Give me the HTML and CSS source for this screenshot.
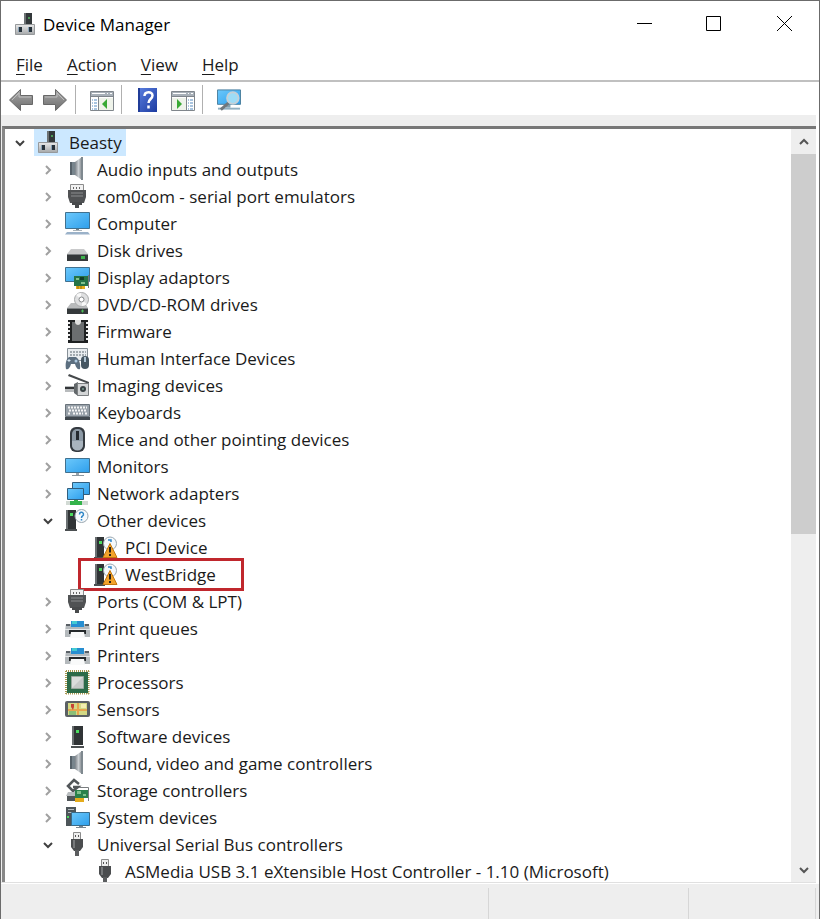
FILE: index.html
```html
<!DOCTYPE html>
<html lang="en">
<head>
  <meta charset="UTF-8">
  <title>Device Manager</title>
  <link rel="stylesheet" href="styles.css">
</head>
<body>

<!-- icon set -->
<svg class="sprite" width="0" height="0" aria-hidden="true">
  <defs>
    <linearGradient id="blue" x1="0" y1="0" x2="1" y2="1">
      <stop offset="0" stop-color="#6cc8fb"/><stop offset="1" stop-color="#2e9fec"/>
    </linearGradient>
    <linearGradient id="grey" x1="0" y1="0" x2="0" y2="1">
      <stop offset="0" stop-color="#a9a9a9"/><stop offset="1" stop-color="#6c6c6c"/>
    </linearGradient>
    <linearGradient id="metal" x1="0" y1="0" x2="1" y2="0">
      <stop offset="0" stop-color="#7b8187"/><stop offset=".5" stop-color="#c9ced2"/><stop offset="1" stop-color="#7f858a"/>
    </linearGradient>
    <linearGradient id="light" x1="0" y1="0" x2="0" y2="1">
      <stop offset="0" stop-color="#e9e9e9"/><stop offset="1" stop-color="#a5a8aa"/>
    </linearGradient>
    <linearGradient id="help-blue" x1="0" y1="0" x2="1" y2="1">
      <stop offset="0" stop-color="#5b7fe0"/><stop offset="1" stop-color="#1c3ba0"/>
    </linearGradient>
  </defs>

  <symbol id="i-root" viewBox="0 0 25 25">
    <path d="M10 1h8v12h-8z" fill="#33383a"/>
    <path d="M10 1h2v12h-2z" fill="#6d7274"/>
    <path d="M14 5h2v2h-2z" fill="#4c9a58"/>
    <path d="M1.500 12.500h19v10h-19z" fill="url(#light)" stroke="#96999b"/>
    <path d="M4 15h4v5H4zM14 15h4v5h-4z" fill="#27323b"/>
    <path d="M4 15h1v5H4zM14 15h1v5h-1z" fill="#8aa3b8"/>
  </symbol>
  <symbol id="i-speaker" viewBox="0 0 25 25">
    <path d="M5 5h5v13H5z" fill="#78858d"/>
    <path d="M5 5h2v13H5z" fill="#566169"/>
    <path d="M10 5L17 0v23l-7-5z" fill="url(#metal)"/>
    <path d="M16 0h2v23h-2z" fill="#7f898f"/>
  </symbol>
  <symbol id="i-serial" viewBox="0 0 25 25">
    <path d="M5.500 .5h13v7h-13z" fill="#f1f1f1" stroke="#8b8b8b"/>
    <path d="M8 3h1v2H8zM11 3h1v2h-1zM14 3h1v2h-1z" fill="#666"/>
    <path d="M3 6h18v7l-2 6H5l-2-6z" fill="#505254"/>
    <path d="M6 9h12M6 12h12" stroke="#8a8c8e"/>
    <path d="M7 18h3v3H7zM14 18h3v3h-3zM10 18h4v6h-4z" fill="#484a4c"/>
  </symbol>
  <symbol id="i-computer" viewBox="0 0 25 25">
    <path d="M.5 1.500h24v16H.5z" fill="url(#blue)" stroke="#41718f"/>
    <path d="M11 18h3v1h-3z" fill="#75818a"/>
    <path d="M8 19h9v1H8z" fill="#aab4bb"/>
    <path d="M2 21h21l2 2.500H0z" fill="#9bb2c9"/>
  </symbol>
  <symbol id="i-disk" viewBox="0 0 25 25">
    <path d="M6 11h13l4 5H2z" fill="#c9cacb"/>
    <path d="M2 16h21v7H2z" fill="#35393b"/>
    <path d="M2 16h21v1H2z" fill="#7d8183"/>
    <path d="M16 18h4v3h-4z" fill="#3eb34d"/>
  </symbol>
  <symbol id="i-display" viewBox="0 0 25 25">
    <path d="M.5 2.500h24v14H.5z" fill="url(#blue)" stroke="#41718f"/>
    <path d="M9 11h14v10H9z" fill="#267346"/>
    <path d="M11 13h3v2h-3zM16 17h4v2h-4z" fill="#82c28d"/>
    <path d="M15 12h4v3h-4z" fill="#153d29"/>
    <path d="M23 10h1v13h-1z" fill="#777"/>
    <path d="M11 21h9v3h-9z" fill="#e5ac1c"/>
    <path d="M13 21v3M16 21v3" stroke="#976f0a"/>
  </symbol>
  <symbol id="i-dvd" viewBox="0 0 25 25">
    <path d="M6 11h14l3 5H2z" fill="#b9bbbc"/>
    <circle cx="16.500" cy="7.500" r="7" fill="#dedfe0" stroke="#a7a9aa"/>
    <path d="M16 7l-5-4a7 7 0 0 1 5-2zM17 8l5 4a7 7 0 0 1-5 2z" fill="#f8f8f8"/>
    <circle cx="16.500" cy="7.500" r="2.500" fill="#fff" stroke="#85888a"/>
    <path d="M2 16h21v6H2z" fill="#35393b"/>
    <path d="M2 16h21v1H2z" fill="#7d8183"/>
    <path d="M16 19h3M17.500 17.500v3" stroke="#4dbd58"/>
  </symbol>
  <symbol id="i-chip" viewBox="0 0 25 25">
    <path d="M3 1h20v23H3z" fill="#1f2122"/>
    <path d="M4 3v20M22 3v20" stroke="#efefef" stroke-width="2" stroke-dasharray="2 2"/>
    <path d="M7 3h3a3 3 0 0 0 6 0h3v19H7z" fill="#6b6e70"/>
    <path d="M10 1h6v2a3 3 0 0 1-6 0z" fill="#e0e0e0"/>
  </symbol>
  <symbol id="i-hid" viewBox="0 0 25 25">
    <path d="M2.500 2.500h20v12h-20z" fill="#e9edf0" stroke="#879097"/>
    <path d="M5 6h16M5 9h16" stroke="#8b949b" stroke-width="1.500" stroke-dasharray="2 1"/>
    <path d="M1 23c-1-5 0-10 3-12h7c3 2 5 7 4 12-2 1-4-1-5-5H6c-1 4-3 6-5 5z" fill="#5c6f80"/>
    <path d="M4 13v3M2.500 14.500h3" stroke="#d5e4ef"/>
    <circle cx="11" cy="15" r="1.500" fill="#aecae0"/>
    <rect x="16" y="10" width="8" height="13" rx="4" fill="#465662"/>
    <path d="M20 11v5" stroke="#adc2d2" stroke-width="2"/>
  </symbol>
  <symbol id="i-camera" viewBox="0 0 25 25">
    <path d="M4 1l20 8v2L3 3z" fill="#45494b"/>
    <path d="M0 13h10v6H0z" fill="#b8bbbd"/>
    <path d="M0 14h10v2H0z" fill="#333638"/>
    <path d="M9 11l4-2v14l-4-3z" fill="#63686b"/>
    <path d="M12.500 10.500h11v12h-11z" fill="#d3d5d6" stroke="#7b7f81"/>
    <circle cx="18" cy="16" r="3" fill="#3a4245"/>
    <circle cx="18" cy="16" r="1" fill="#789b8e"/>
  </symbol>
  <symbol id="i-keyboard" viewBox="0 0 25 25">
    <path d="M.5 4.500h24v12H.5z" fill="#98a1a9" stroke="#6a737b"/>
    <path d="M3 7.500h19M4 10.500h18M3 13.500h3M8 13.500h10M20 13.500h2" stroke="#f5f5f5" stroke-width="2" stroke-dasharray="2 1"/>
    <path d="M0 17h25v3H0z" fill="#41484e"/>
  </symbol>
  <symbol id="i-mouse" viewBox="0 0 25 25">
    <rect x="5" y="0" width="15" height="25" rx="6" fill="#343a40"/>
    <rect x="7" y="2" width="11" height="21" rx="5" fill="#8d9aa6"/>
    <path d="M7 14h11v4a5 5 0 0 1-11 0z" fill="#a9b4be"/>
    <path d="M11 4h3v9h-3z" fill="#242a30"/>
  </symbol>
  <symbol id="i-monitor" viewBox="0 0 25 25">
    <path d="M.5 4.500h24v14H.5z" fill="url(#blue)" stroke="#41718f"/>
    <path d="M11 19h3v2h-3z" fill="#98a3ab"/>
    <path d="M7 21h12v1H7z" fill="#8c979f"/>
  </symbol>
  <symbol id="i-network" viewBox="0 0 25 25">
    <path d="M7.500 1.500h17v12h-17z" fill="url(#blue)" stroke="#315e7e"/>
    <path d="M2.500 7.500h16v11h-16z" fill="url(#blue)" stroke="#315e7e"/>
    <path d="M1 20h22v4H1z" fill="#d2dad4"/>
    <path d="M9 19h4v1h4v4H5v-4h4z" fill="#33b34a"/>
  </symbol>
  <symbol id="i-other" viewBox="0 0 25 25">
    <path d="M1 2h10v19H1z" fill="#303436"/>
    <path d="M1 2h2v19H1z" fill="#6b7072"/>
    <path d="M0 21h12v2H0z" fill="#4b4f51"/>
    <path d="M5 5h3v3H5z" fill="#4bdc5f"/>
    <circle cx="16.500" cy="8" r="6.500" fill="#f5f9fc" stroke="#9ba8b1"/>
    <path d="M14.500 6.500a2 2 0 1 1 3 1.500q-1 .5-1 2M16.500 11v1.500" fill="none" stroke="#3187c7" stroke-width="1.500"/>
  </symbol>
  <symbol id="i-unknown" viewBox="0 0 25 25">
    <path d="M2 2h9v20H2z" fill="#303436"/>
    <path d="M2 2h2v20H2z" fill="#6b7072"/>
    <path d="M1 22h11v2H1z" fill="#4b4f51"/>
    <path d="M6 6h3v3H6z" fill="#4bdc5f"/>
    <circle cx="17" cy="8.500" r="6.500" fill="#f5f9fc" stroke="#9ba8b1"/>
    <path d="M15 5h3v2" fill="none" stroke="#3187c7" stroke-width="1.500"/>
    <path d="M17 8.500L24 22.500H10z" fill="#f3a32b" stroke="#c47810" stroke-linejoin="round"/>
    <path d="M17 12v5.500M17 19v2" stroke="#28221a" stroke-width="2"/>
  </symbol>
  <symbol id="i-printer" viewBox="0 0 25 25">
    <path d="M1 8h23l1 7v6H0v-6z" fill="#b4b9bc"/>
    <path d="M6 5h13v6H6z" fill="#278ed1"/>
    <path d="M7 5h5v3H7z" fill="#43cbd2"/>
    <path d="M1 8h4v2H1zM20 8h4v2h-4z" fill="#596066"/>
    <path d="M0 13h25v1H0z" fill="#e6e8e9"/>
    <path d="M4 14h17v4H4z" fill="#25292b"/>
    <path d="M6 16h13l1 6H5z" fill="#f9fafa"/>
  </symbol>
  <symbol id="i-cpu" viewBox="0 0 25 25">
    <path d="M1 1v23M23.500 1v23M1 1h23M1 23.500h23" stroke="#a7974e" stroke-width="2" stroke-dasharray="1 1"/>
    <path d="M2 2h21v21H2z" fill="#2c6b48"/>
    <path d="M6.500 6.500h12v12h-12z" fill="#dadddb" stroke="#99a99e"/>
    <path d="M7 18L18 7v11z" fill="#c5c9c7"/>
  </symbol>
  <symbol id="i-sensor" viewBox="0 0 25 25">
    <rect x="0" y="4" width="25" height="16" rx="2" fill="#5b6164"/>
    <path d="M3 6h19v12H3z" fill="#d4da85"/>
    <path d="M12 6h2v12h-2zM3 12h19v2H3z" fill="#e6a64f"/>
    <path d="M4 14h7v4H4z" fill="#8cbf77"/>
    <path d="M6 7h3v3l-1 3-2-3z" fill="#c94336"/>
    <path d="M16 7h5v4h-5z" fill="#f3eeb1"/>
  </symbol>
  <symbol id="i-software" viewBox="0 0 25 25">
    <path d="M7 2h11v19H7z" fill="#303436"/>
    <path d="M7 2h2v19H7z" fill="#696e70"/>
    <path d="M6 22h13v2H6z" fill="#4b4f51"/>
    <path d="M11 6h3v3h-3z" fill="#4bdc5f"/>
  </symbol>
  <symbol id="i-storage" viewBox="0 0 25 25">
    <path d="M14 6L9 2 3 8l5 5 5-4H8" fill="none" stroke="#515659" stroke-width="2.500"/>
    <path d="M2 18h9v5H2z" fill="#505558"/>
    <path d="M3 14h7l2 4H1z" fill="#b8bcbe"/>
    <path d="M10 12h13v8H10z" fill="#2b814a"/>
    <path d="M12 13h4v3h-4zM18 16h3v2h-3z" fill="#7fc08a"/>
    <path d="M10 20h9v4h-9z" fill="#e5ac1c"/>
    <path d="M14 9.500h9.500V23" fill="none" stroke="#797d7f"/>
  </symbol>
  <symbol id="i-system" viewBox="0 0 25 25">
    <path d="M1 2h10v19H1z" fill="#4d5559"/>
    <path d="M3 4h6v1H3zM3 7h6v1H3z" fill="#b5bcbf"/>
    <path d="M2 11h2v2H2z" fill="#4bdc5f"/>
    <path d="M6.500 7.500h18v13h-18z" fill="url(#blue)" stroke="#3b6b89"/>
    <path d="M14 21h4v1h-4zM11 22h10v1H11z" fill="#7a8790"/>
  </symbol>
  <symbol id="i-usb" viewBox="0 0 25 25">
    <path d="M8.500 .5h7v7h-7z" fill="#eee" stroke="#8b8b8b"/>
    <path d="M10 3h1v2h-1zM13 3h1v2h-1z" fill="#555"/>
    <path d="M6 7h12v8l-3 4H9l-3-4z" fill="#4b4d4f"/>
    <path d="M8 8h2v8H8z" fill="#77797b"/>
    <path d="M10 18h4v6h-4z" fill="#5b5d5f"/>
  </symbol>

  <!-- toolbar -->
  <symbol id="t-arrow" viewBox="0 0 24 24">
    <path d="M.5 12L11.500 1.500v6h12v9h-12v6z" fill="url(#grey)" stroke="#686868" stroke-linejoin="round"/>
    <path d="M3 12l7-7v4h12" fill="none" stroke="#bdbdbd"/>
  </symbol>
  <symbol id="t-panel" viewBox="0 0 24 24">
    <path d="M.5 3.500h23v19H.5z" fill="#fff" stroke="#80868c"/>
    <path d="M1 4h22v5H1z" fill="#a8b0b8"/>
    <path d="M2 5.500h13M17 5.500h1M20 5.500h2" stroke="#fff"/>
    <path d="M1 8.500h22M8.500 9v13" stroke="#80868c"/>
    <path d="M2 12h5M2 15h5M2 18h5M2 21h5" stroke="#548bc0" stroke-dasharray="1 1 3"/>
    <path d="M9 10h14v12H9z" fill="#eff3ea"/>
    <path d="M12 16l5-5v10z" fill="#39a935"/>
  </symbol>
  <symbol id="t-run" viewBox="0 0 24 24">
    <path d="M.5 3.500h23v19H.5z" fill="#fff" stroke="#80868c"/>
    <path d="M1 4h22v5H1z" fill="#a8b0b8"/>
    <path d="M2 5.500h13M17 5.500h1M20 5.500h2" stroke="#fff"/>
    <path d="M1 10h14v12H1z" fill="#eff3ea"/>
    <path d="M1 8.500h22M15.500 9v13" stroke="#80868c"/>
    <path d="M17 12h5M17 15h5M17 18h5M17 21h5" stroke="#548bc0" stroke-dasharray="1 1 3"/>
    <path d="M11 16l-5-5v10z" fill="#39a935"/>
  </symbol>
  <symbol id="t-help" viewBox="0 0 24 24">
    <path d="M2 0h19v24H2z" fill="url(#help-blue)"/>
    <path d="M2 0h2v24H2z" fill="#203c98"/>
    <path d="M8.500 8c0-5 8-5 8-.5 0 3.500-4 3.500-4 7.500M12.500 17.500v3" fill="none" stroke="#fff" stroke-width="2.500"/>
  </symbol>
  <symbol id="t-scan" viewBox="0 0 25 24">
    <path d="M.5 1.500h24v15H.5z" fill="url(#blue)" stroke="#4a7e9d"/>
    <path d="M9 17h5v3H9z" fill="#829fae"/>
    <path d="M1 20h23v2H1z" fill="#91afc0"/>
    <path d="M12 15l-8 7" stroke="#70777c" stroke-width="3"/>
    <circle cx="16.500" cy="10" r="6" fill="#9ddcf6" stroke="#c5d0d7" stroke-width="2"/>
  </symbol>

  <symbol id="c-right" viewBox="0 0 16 16">
    <path d="M6 4l4 4-4 4" fill="none" stroke="#a0a0a0" stroke-width="2"/>
  </symbol>
  <symbol id="c-down" viewBox="0 0 16 16">
    <path d="M4 6l4 4 4-4" fill="none" stroke="#404040" stroke-width="2"/>
  </symbol>
</svg>

<div class="window">
  <header class="titlebar">
    <svg class="icon"><use href="#i-root"/></svg>
    <h1>Device Manager</h1>
    <div class="window-buttons">
      <button aria-label="Minimise"><svg viewBox="0 0 16 16"><path d="M1 7.500h15"/></svg></button>
      <button aria-label="Maximise"><svg viewBox="0 0 16 16"><path d="M.5 .5h14v14H.5z"/></svg></button>
      <button aria-label="Close"><svg viewBox="0 0 16 16"><path d="M1 0l15 15M16 0L1 15"/></svg></button>
    </div>
  </header>

  <nav class="menubar">
    <button><u>F</u>ile</button>
    <button><u>A</u>ction</button>
    <button><u>V</u>iew</button>
    <button><u>H</u>elp</button>
  </nav>

  <div class="toolbar">
    <div class="group nav">
      <button aria-label="Back"><svg><use href="#t-arrow"/></svg></button>
      <button aria-label="Forward" class="flip"><svg><use href="#t-arrow"/></svg></button>
    </div>
    <div class="group">
      <button aria-label="Show console tree"><svg><use href="#t-panel"/></svg></button>
    </div>
    <div class="group">
      <button aria-label="Help"><svg><use href="#t-help"/></svg></button>
      <button aria-label="Show action pane"><svg><use href="#t-run"/></svg></button>
    </div>
    <div class="group">
      <button aria-label="Scan for hardware changes"><svg><use href="#t-scan"/></svg></button>
    </div>
  </div>

  <main class="pane">
    <ul class="tree">
      <li>
        <div class="row"><button class="toggle" aria-label="Collapse"><svg><use href="#c-down"/></svg></button><span class="node selected"><svg class="icon"><use href="#i-root"/></svg>Beasty</span></div>
        <ul>
          <li class="row"><button class="toggle" aria-label="Expand"><svg><use href="#c-right"/></svg></button><span class="node"><svg class="icon"><use href="#i-speaker"/></svg>Audio inputs and outputs</span></li>
          <li class="row"><button class="toggle" aria-label="Expand"><svg><use href="#c-right"/></svg></button><span class="node"><svg class="icon"><use href="#i-serial"/></svg>com0com - serial port emulators</span></li>
          <li class="row"><button class="toggle" aria-label="Expand"><svg><use href="#c-right"/></svg></button><span class="node"><svg class="icon"><use href="#i-computer"/></svg>Computer</span></li>
          <li class="row"><button class="toggle" aria-label="Expand"><svg><use href="#c-right"/></svg></button><span class="node"><svg class="icon"><use href="#i-disk"/></svg>Disk drives</span></li>
          <li class="row"><button class="toggle" aria-label="Expand"><svg><use href="#c-right"/></svg></button><span class="node"><svg class="icon"><use href="#i-display"/></svg>Display adaptors</span></li>
          <li class="row"><button class="toggle" aria-label="Expand"><svg><use href="#c-right"/></svg></button><span class="node"><svg class="icon"><use href="#i-dvd"/></svg>DVD/CD-ROM drives</span></li>
          <li class="row"><button class="toggle" aria-label="Expand"><svg><use href="#c-right"/></svg></button><span class="node"><svg class="icon"><use href="#i-chip"/></svg>Firmware</span></li>
          <li class="row"><button class="toggle" aria-label="Expand"><svg><use href="#c-right"/></svg></button><span class="node"><svg class="icon"><use href="#i-hid"/></svg>Human Interface Devices</span></li>
          <li class="row"><button class="toggle" aria-label="Expand"><svg><use href="#c-right"/></svg></button><span class="node"><svg class="icon"><use href="#i-camera"/></svg>Imaging devices</span></li>
          <li class="row"><button class="toggle" aria-label="Expand"><svg><use href="#c-right"/></svg></button><span class="node"><svg class="icon"><use href="#i-keyboard"/></svg>Keyboards</span></li>
          <li class="row"><button class="toggle" aria-label="Expand"><svg><use href="#c-right"/></svg></button><span class="node"><svg class="icon"><use href="#i-mouse"/></svg>Mice and other pointing devices</span></li>
          <li class="row"><button class="toggle" aria-label="Expand"><svg><use href="#c-right"/></svg></button><span class="node"><svg class="icon"><use href="#i-monitor"/></svg>Monitors</span></li>
          <li class="row"><button class="toggle" aria-label="Expand"><svg><use href="#c-right"/></svg></button><span class="node"><svg class="icon"><use href="#i-network"/></svg>Network adapters</span></li>
          <li>
            <div class="row"><button class="toggle" aria-label="Collapse"><svg><use href="#c-down"/></svg></button><span class="node"><svg class="icon"><use href="#i-other"/></svg>Other devices</span></div>
            <ul>
              <li class="row leaf"><span class="node"><svg class="icon"><use href="#i-unknown"/></svg>PCI Device</span></li>
              <li class="row leaf"><span class="node marked"><svg class="icon"><use href="#i-unknown"/></svg>WestBridge</span></li>
            </ul>
          </li>
          <li class="row"><button class="toggle" aria-label="Expand"><svg><use href="#c-right"/></svg></button><span class="node"><svg class="icon"><use href="#i-serial"/></svg>Ports (COM &amp; LPT)</span></li>
          <li class="row"><button class="toggle" aria-label="Expand"><svg><use href="#c-right"/></svg></button><span class="node"><svg class="icon"><use href="#i-printer"/></svg>Print queues</span></li>
          <li class="row"><button class="toggle" aria-label="Expand"><svg><use href="#c-right"/></svg></button><span class="node"><svg class="icon"><use href="#i-printer"/></svg>Printers</span></li>
          <li class="row"><button class="toggle" aria-label="Expand"><svg><use href="#c-right"/></svg></button><span class="node"><svg class="icon"><use href="#i-cpu"/></svg>Processors</span></li>
          <li class="row"><button class="toggle" aria-label="Expand"><svg><use href="#c-right"/></svg></button><span class="node"><svg class="icon"><use href="#i-sensor"/></svg>Sensors</span></li>
          <li class="row"><button class="toggle" aria-label="Expand"><svg><use href="#c-right"/></svg></button><span class="node"><svg class="icon"><use href="#i-software"/></svg>Software devices</span></li>
          <li class="row"><button class="toggle" aria-label="Expand"><svg><use href="#c-right"/></svg></button><span class="node"><svg class="icon"><use href="#i-speaker"/></svg>Sound, video and game controllers</span></li>
          <li class="row"><button class="toggle" aria-label="Expand"><svg><use href="#c-right"/></svg></button><span class="node"><svg class="icon"><use href="#i-storage"/></svg>Storage controllers</span></li>
          <li class="row"><button class="toggle" aria-label="Expand"><svg><use href="#c-right"/></svg></button><span class="node"><svg class="icon"><use href="#i-system"/></svg>System devices</span></li>
          <li>
            <div class="row"><button class="toggle" aria-label="Collapse"><svg><use href="#c-down"/></svg></button><span class="node"><svg class="icon"><use href="#i-usb"/></svg>Universal Serial Bus controllers</span></div>
            <ul>
              <li class="row leaf"><span class="node"><svg class="icon"><use href="#i-usb"/></svg>ASMedia USB 3.1 eXtensible Host Controller - 1.10 (Microsoft)</span></li>
            </ul>
          </li>
        </ul>
      </li>
    </ul>
    <div class="scrollbar">
      <button aria-label="Scroll up"><svg viewBox="0 0 16 16"><path d="M4 10l4-4 4 4"/></svg></button>
      <div class="track"><div class="thumb"></div></div>
      <button aria-label="Scroll down"><svg viewBox="0 0 16 16"><path d="M4 6l4 4 4-4"/></svg></button>
    </div>
  </main>

  <footer class="statusbar"><span></span><span></span><span></span></footer>
</div>

</body>
</html>
```

FILE: styles.css
```css
* {
  box-sizing: border-box;
}

body {
  margin: 0;
  font-family: "Open Sans", "Noto Sans", sans-serif;
  font-size: 17px;
  color: #1a1a1a;
}

button {
  padding: 0;
  border: none;
  background: none;
  font: inherit;
  color: inherit;
}

svg {
  display: block;
}

ul {
  list-style: none;
  margin: 0;
  padding: 0;
}

.sprite {
  position: absolute;
}

.window {
  display: flex;
  flex-direction: column;
  height: 100vh;
  border: 1px solid #6b6b6b;
  border-bottom: none;
  background: #fff;
}

.icon {
  width: 25px;
  height: 25px;
  flex: none;
}

/* title bar */
.titlebar {
  display: flex;
  align-items: center;
  gap: 4px;
  height: 46px;
  padding-left: 13px;
}

.titlebar h1 {
  margin: 0;
  font-size: 17px;
  font-weight: normal;
  color: #000;
}

.window-buttons {
  display: flex;
  margin-left: auto;
}

.window-buttons button {
  display: flex;
  align-items: center;
  justify-content: center;
  width: 70px;
  height: 46px;
}

.window-buttons svg {
  width: 16px;
  height: 16px;
  fill: none;
  stroke: #000;
}

/* menu */
.menubar {
  display: flex;
  gap: 24px;
  height: 33px;
  padding: 2px 0 0 15px;
}

.menubar u {
  text-underline-offset: 3px;
}

/* toolbar */
.toolbar {
  display: flex;
  align-items: stretch;
  height: 35px;
  padding: 3px 0 1px 8px;
  border-top: 2px solid #c0c0c0;
}

.group {
  display: flex;
  align-items: center;
  gap: 11px;
  padding-right: 7px;
}

.group.nav {
  gap: 10px;
  padding-right: 8px;
}

.group + .group {
  padding-left: 14px;
  border-left: 1px solid #b0b0b0;
}

.group svg {
  width: 24px;
  height: 24px;
}

.flip {
  transform: scaleX(-1);
}

/* device tree */
.pane {
  display: flex;
  flex: 1;
  min-height: 0;
  margin-right: 3px;
  border-top: 11px solid #eee;
  border-bottom: 1px solid #e0e0e0;
  border-left: 1px solid #eee;
  background: #fff;
}

.tree {
  flex: 1;
  overflow: hidden;
  padding-left: 7px;
  border-top: 3px solid #777;
  border-left: 3px solid #888;
  line-height: 20px;
}

.tree ul {
  padding-left: 28px;
}

.row {
  display: flex;
  align-items: center;
  height: 27px;
}

.toggle {
  margin-right: 6px;
}

.toggle svg {
  width: 16px;
  height: 16px;
}

.leaf {
  padding-left: 22px;
}

.node {
  position: relative;
  display: flex;
  align-items: center;
  gap: 7px;
  height: 27px;
  padding: 0 4px 0 3px;
  white-space: nowrap;
}

.selected {
  background: #cce8ff;
}

.marked::after {
  content: "";
  position: absolute;
  top: -3px;
  right: -24px;
  bottom: -3px;
  left: -12px;
  border: 3px solid #c0272d;
}

/* scrollbar */
.scrollbar {
  display: flex;
  flex-direction: column;
  width: 25px;
  border-top: 3px solid #777;
  background: #eee;
}

.scrollbar button {
  display: flex;
  align-items: center;
  justify-content: center;
  height: 25px;
}

.scrollbar svg {
  width: 16px;
  height: 16px;
  fill: none;
  stroke: #555;
  stroke-width: 2;
}

.track {
  flex: 1;
}

.thumb {
  height: 54%;
  background: #cdcdcd;
}

/* status bar */
.statusbar {
  display: flex;
  height: 36px;
  padding: 4px 3px 0 0;
  border-top: 1px solid #fff;
  background: #eee;
}

.statusbar span {
  width: 200px;
  border-right: 1px solid #d6d6d6;
}

.statusbar span:first-child {
  flex: 1;
}

.statusbar span:last-child {
  width: 127px;
}
```
